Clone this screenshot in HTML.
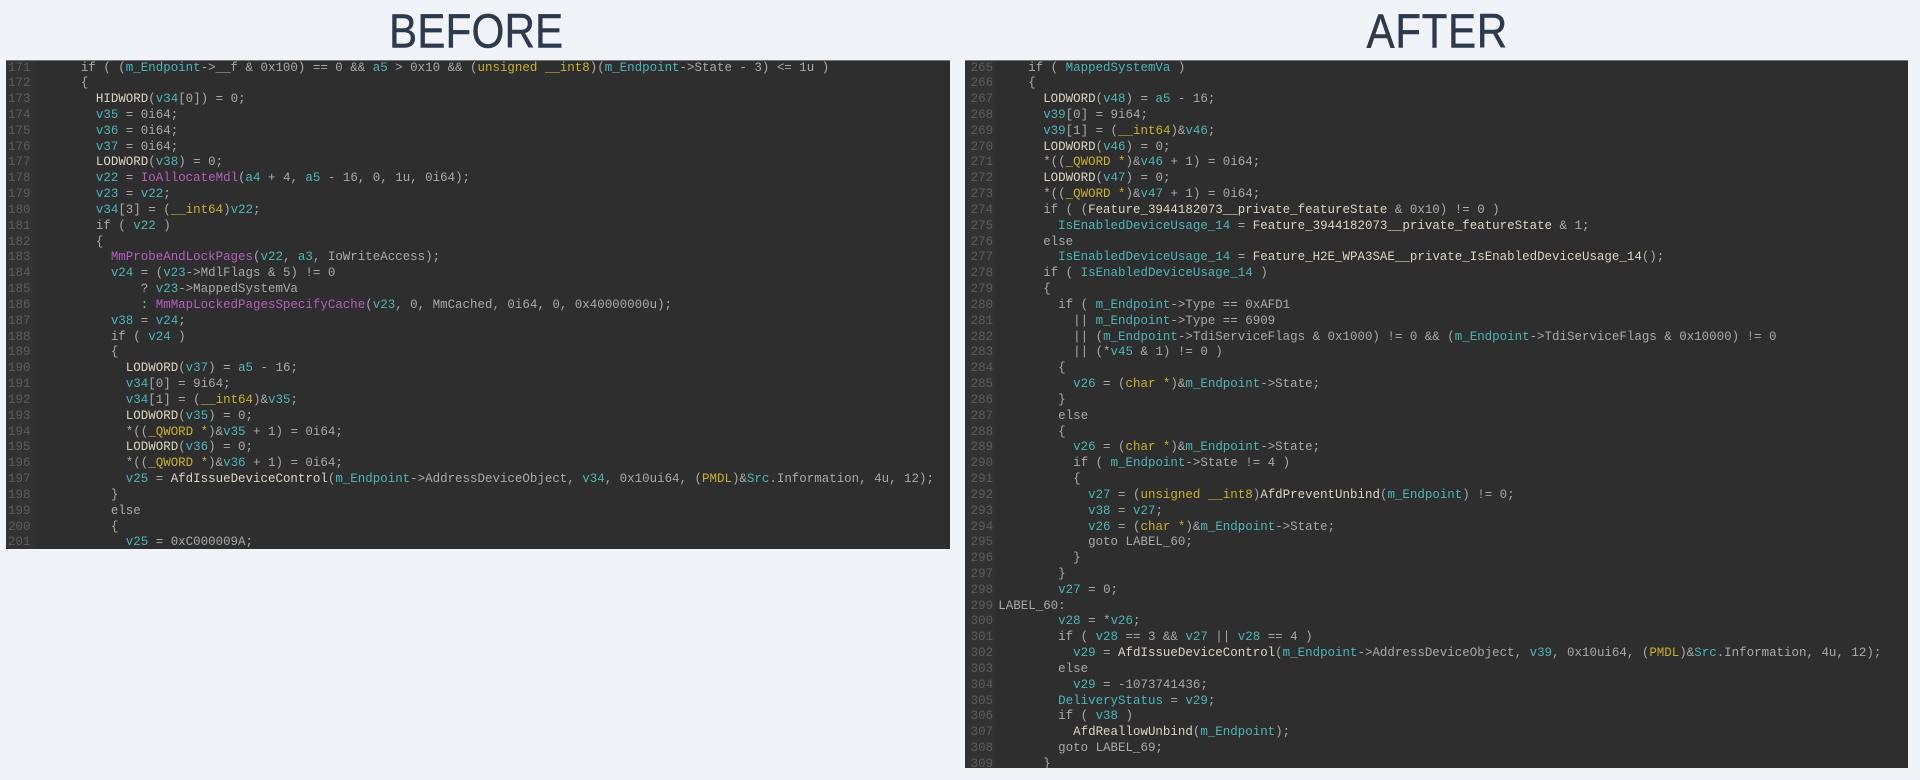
<!DOCTYPE html>
<html lang="en">
<head>
<meta charset="utf-8">
<title>Before / After</title>
<style>
html,body{margin:0;padding:0;width:1920px;height:780px;overflow:hidden;background:#f0f4f8}
svg.t{position:absolute;left:0;top:0;width:1920px;height:60px}
.p{position:absolute;background:#2e2e2e;overflow:hidden;box-sizing:border-box;border-top:1px solid #757575}
.g{position:absolute;left:0;top:0;bottom:0;background:#323232}
.c{position:absolute;top:-.5px;margin:0;font:12.47px/15.84px "Liberation Mono",monospace;color:#a9a9a9;filter:blur(.35px)}
.c div{position:relative;height:15.84px;white-space:pre}
.c i{position:absolute;font-style:normal;color:#5c5c5c}
.c b{font-weight:normal;color:#4db5b8}
.c u{text-decoration:none;color:#c9b02e}
.c s{text-decoration:none;color:#dcd6be}
.c em{font-style:normal;color:#b45fbe}
#a{left:6px;top:60px;width:944px;height:489px}
#a .g{width:30px}
#a .c{left:30px}
#a i{left:-28px}
#b{left:965px;top:60px;width:943px;height:708px}
#b .g{width:30px}
#b .c{left:33.3px}
#b i{left:-27.7px}
</style>
</head>
<body>
<svg class="t" viewBox="0 0 1920 60">
<g transform="translate(389 47.7) scale(.88 1)"><text x="0" y="0" font-family="Liberation Sans, sans-serif" font-size="48" fill="#2d3a4e" stroke="#2d3a4e" stroke-width=".4" textLength="198" lengthAdjust="spacing">BEFORE</text></g>
<g transform="translate(1366.5 47.7) scale(.88 1)"><text x="0" y="0" font-family="Liberation Sans, sans-serif" font-size="48" fill="#2d3a4e" stroke="#2d3a4e" stroke-width=".4" textLength="160" lengthAdjust="spacing">AFTER</text></g>
</svg>

<div class="p" id="a"><div class="g"></div><div class="c">
<div><i>171</i>      if ( (<b>m_Endpoint</b>-&gt;__f &amp; 0x100) == 0 &amp;&amp; <b>a5</b> &gt; 0x10 &amp;&amp; (<u>unsigned __int8</u>)(<b>m_Endpoint</b>-&gt;State - 3) &lt;= 1u )</div>
<div><i>172</i>      {</div>
<div><i>173</i>        <s>HIDWORD</s>(<b>v34</b>[0]) = 0;</div>
<div><i>174</i>        <b>v35</b> = 0i64;</div>
<div><i>175</i>        <b>v36</b> = 0i64;</div>
<div><i>176</i>        <b>v37</b> = 0i64;</div>
<div><i>177</i>        <s>LODWORD</s>(<b>v38</b>) = 0;</div>
<div><i>178</i>        <b>v22</b> = <em>IoAllocateMdl</em>(<b>a4</b> + 4, <b>a5</b> - 16, 0, 1u, 0i64);</div>
<div><i>179</i>        <b>v23</b> = <b>v22</b>;</div>
<div><i>180</i>        <b>v34</b>[3] = (<u>__int64</u>)<b>v22</b>;</div>
<div><i>181</i>        if ( <b>v22</b> )</div>
<div><i>182</i>        {</div>
<div><i>183</i>          <em>MmProbeAndLockPages</em>(<b>v22</b>, <b>a3</b>, IoWriteAccess);</div>
<div><i>184</i>          <b>v24</b> = (<b>v23</b>-&gt;MdlFlags &amp; 5) != 0</div>
<div><i>185</i>              ? <b>v23</b>-&gt;MappedSystemVa</div>
<div><i>186</i>              : <em>MmMapLockedPagesSpecifyCache</em>(<b>v23</b>, 0, MmCached, 0i64, 0, 0x40000000u);</div>
<div><i>187</i>          <b>v38</b> = <b>v24</b>;</div>
<div><i>188</i>          if ( <b>v24</b> )</div>
<div><i>189</i>          {</div>
<div><i>190</i>            <s>LODWORD</s>(<b>v37</b>) = <b>a5</b> - 16;</div>
<div><i>191</i>            <b>v34</b>[0] = 9i64;</div>
<div><i>192</i>            <b>v34</b>[1] = (<u>__int64</u>)&amp;<b>v35</b>;</div>
<div><i>193</i>            <s>LODWORD</s>(<b>v35</b>) = 0;</div>
<div><i>194</i>            *((<u>_QWORD *</u>)&amp;<b>v35</b> + 1) = 0i64;</div>
<div><i>195</i>            <s>LODWORD</s>(<b>v36</b>) = 0;</div>
<div><i>196</i>            *((<u>_QWORD *</u>)&amp;<b>v36</b> + 1) = 0i64;</div>
<div><i>197</i>            <b>v25</b> = <s>AfdIssueDeviceControl</s>(<b>m_Endpoint</b>-&gt;AddressDeviceObject, <b>v34</b>, 0x10ui64, (<u>PMDL</u>)&amp;<b>Src</b>.Information, 4u, 12);</div>
<div><i>198</i>          }</div>
<div><i>199</i>          else</div>
<div><i>200</i>          {</div>
<div><i>201</i>            <b>v25</b> = 0xC000009A;</div>
</div></div>

<div class="p" id="b"><div class="g"></div><div class="c">
<div><i>265</i>    if ( <b>MappedSystemVa</b> )</div>
<div><i>266</i>    {</div>
<div><i>267</i>      <s>LODWORD</s>(<b>v48</b>) = <b>a5</b> - 16;</div>
<div><i>268</i>      <b>v39</b>[0] = 9i64;</div>
<div><i>269</i>      <b>v39</b>[1] = (<u>__int64</u>)&amp;<b>v46</b>;</div>
<div><i>270</i>      <s>LODWORD</s>(<b>v46</b>) = 0;</div>
<div><i>271</i>      *((<u>_QWORD *</u>)&amp;<b>v46</b> + 1) = 0i64;</div>
<div><i>272</i>      <s>LODWORD</s>(<b>v47</b>) = 0;</div>
<div><i>273</i>      *((<u>_QWORD *</u>)&amp;<b>v47</b> + 1) = 0i64;</div>
<div><i>274</i>      if ( (<s>Feature_3944182073__private_featureState</s> &amp; 0x10) != 0 )</div>
<div><i>275</i>        <b>IsEnabledDeviceUsage_14</b> = <s>Feature_3944182073__private_featureState</s> &amp; 1;</div>
<div><i>276</i>      else</div>
<div><i>277</i>        <b>IsEnabledDeviceUsage_14</b> = <s>Feature_H2E_WPA3SAE__private_IsEnabledDeviceUsage_14</s>();</div>
<div><i>278</i>      if ( <b>IsEnabledDeviceUsage_14</b> )</div>
<div><i>279</i>      {</div>
<div><i>280</i>        if ( <b>m_Endpoint</b>-&gt;Type == 0xAFD1</div>
<div><i>281</i>          || <b>m_Endpoint</b>-&gt;Type == 6909</div>
<div><i>282</i>          || (<b>m_Endpoint</b>-&gt;TdiServiceFlags &amp; 0x1000) != 0 &amp;&amp; (<b>m_Endpoint</b>-&gt;TdiServiceFlags &amp; 0x10000) != 0</div>
<div><i>283</i>          || (*<b>v45</b> &amp; 1) != 0 )</div>
<div><i>284</i>        {</div>
<div><i>285</i>          <b>v26</b> = (<u>char *</u>)&amp;<b>m_Endpoint</b>-&gt;State;</div>
<div><i>286</i>        }</div>
<div><i>287</i>        else</div>
<div><i>288</i>        {</div>
<div><i>289</i>          <b>v26</b> = (<u>char *</u>)&amp;<b>m_Endpoint</b>-&gt;State;</div>
<div><i>290</i>          if ( <b>m_Endpoint</b>-&gt;State != 4 )</div>
<div><i>291</i>          {</div>
<div><i>292</i>            <b>v27</b> = (<u>unsigned __int8</u>)<s>AfdPreventUnbind</s>(<b>m_Endpoint</b>) != 0;</div>
<div><i>293</i>            <b>v38</b> = <b>v27</b>;</div>
<div><i>294</i>            <b>v26</b> = (<u>char *</u>)&amp;<b>m_Endpoint</b>-&gt;State;</div>
<div><i>295</i>            goto LABEL_60;</div>
<div><i>296</i>          }</div>
<div><i>297</i>        }</div>
<div><i>298</i>        <b>v27</b> = 0;</div>
<div><i>299</i>LABEL_60:</div>
<div><i>300</i>        <b>v28</b> = *<b>v26</b>;</div>
<div><i>301</i>        if ( <b>v28</b> == 3 &amp;&amp; <b>v27</b> || <b>v28</b> == 4 )</div>
<div><i>302</i>          <b>v29</b> = <s>AfdIssueDeviceControl</s>(<b>m_Endpoint</b>-&gt;AddressDeviceObject, <b>v39</b>, 0x10ui64, (<u>PMDL</u>)&amp;<b>Src</b>.Information, 4u, 12);</div>
<div><i>303</i>        else</div>
<div><i>304</i>          <b>v29</b> = -1073741436;</div>
<div><i>305</i>        <b>DeliveryStatus</b> = <b>v29</b>;</div>
<div><i>306</i>        if ( <b>v38</b> )</div>
<div><i>307</i>          <s>AfdReallowUnbind</s>(<b>m_Endpoint</b>);</div>
<div><i>308</i>        goto LABEL_69;</div>
<div><i>309</i>      }</div>
</div></div>
</body>
</html>
